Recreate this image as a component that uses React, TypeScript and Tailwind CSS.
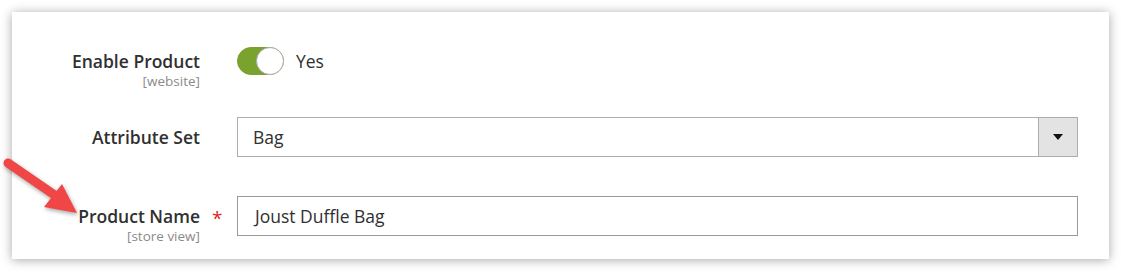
import React from "react";

const font = { fontFamily: '"Open Sans", "Noto Sans", Arial, sans-serif' };

function Label({ title, scope, pt }: { title: string; scope?: string; pt: string }) {
  return (
    <div className={`flex w-[188px] shrink-0 flex-col items-end ${pt}`}>
      <span className="text-[17.5px] leading-[20px] font-semibold text-[#303030]">{title}</span>
      {scope && (
        <span className="mt-[3px] text-[13.5px] leading-[14px] text-[#8a8a8a]">[{scope}]</span>
      )}
    </div>
  );
}

function Toggle() {
  return (
    <div className="flex items-center">
      <div className="relative h-[28px] w-[47px] rounded-full border border-[#79a22e] bg-[#79a22e]">
        <div className="absolute right-[-1px] top-[-1px] h-[28px] w-[28px] rounded-full border border-[#adadad] bg-white" />
      </div>
      <span className="ml-[12px] text-[17.5px] text-[#303030]">Yes</span>
    </div>
  );
}

export default function App() {
  return (
    <div className="relative h-[272px] w-[1121px] bg-white" style={font}>
      <div className="absolute left-[12px] top-[12px] h-[247px] w-[1097px] bg-white shadow-[0_1px_10px_rgba(0,0,0,0.35)]">
        <div className="pt-[35px]">
          {/* Enable Product */}
          <div className="flex h-[70px] items-start">
            <Label title="Enable Product" scope="website" pt="pt-[4px]" />
            <div className="ml-[37px]">
              <Toggle />
            </div>
          </div>

          {/* Attribute Set */}
          <div className="flex h-[79px] items-start">
            <Label title="Attribute Set" pt="pt-[10px]" />
            <div className="ml-[37px] flex h-[40px] w-[841px] border border-[#adadad] bg-white">
              <div className="flex flex-1 items-center pl-[15px] text-[17.5px] text-[#303030]">Bag</div>
              <div className="flex w-[39px] items-center justify-center border-l border-[#adadad] bg-[#e3e3e3]">
                <svg width="10" height="6" viewBox="0 0 10 6">
                  <path d="M0 0 H10 L5 6 Z" fill="#111" />
                </svg>
              </div>
            </div>
          </div>

          {/* Product Name */}
          <div className="flex items-start">
            <Label title="Product Name" scope="store view" pt="pt-[10px]" />
            <div className="flex w-[37px] justify-start pl-[12px] pt-[12px]">
              <span className="text-[19px] leading-[20px] text-[#e22626]">*</span>
            </div>
            <div className="flex h-[40px] w-[841px] items-center border border-[#999] bg-white pl-[17px] text-[17.5px] text-[#303030]">
              Joust Duffle Bag
            </div>
          </div>
        </div>
      </div>

      {/* annotation arrow */}
      <svg
        className="absolute left-0 top-[150px]"
        width="90"
        height="75"
        viewBox="0 0 90 75"
        style={{ filter: "drop-shadow(1px 2px 2px rgba(0,0,0,0.35))" }}
      >
        <line x1="8" y1="13" x2="56" y2="46" stroke="#f04646" strokeWidth="9" strokeLinecap="round" />
        <path d="M77 63 L62 34 L44 57 Z" fill="#f04646" />
      </svg>
    </div>
  );
}
